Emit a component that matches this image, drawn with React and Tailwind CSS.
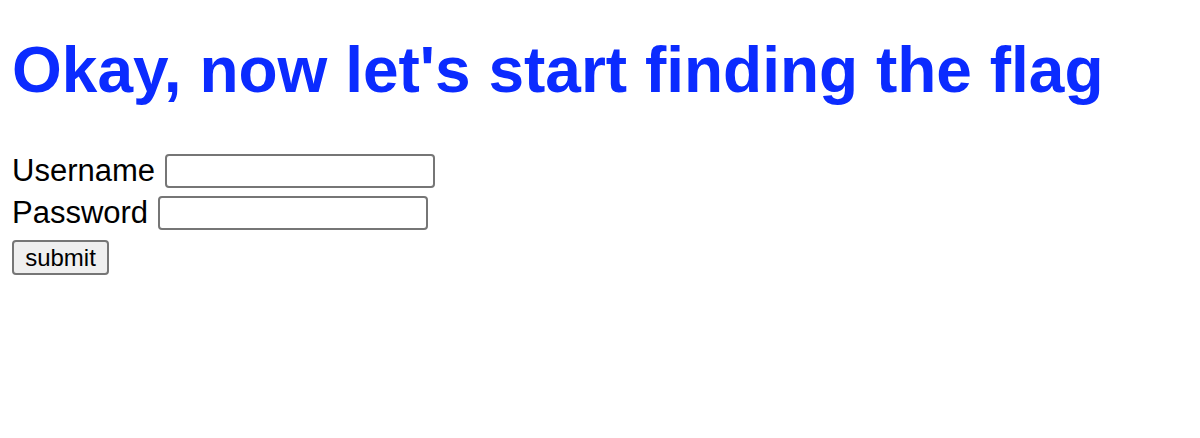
export default function App() {
  return (
    <div className="min-h-[438px] bg-white px-3 pt-[38px] text-black font-['Liberation_Sans',Arial,sans-serif]">
      <h1 className="text-[64px] font-bold leading-[64px] text-[#0b2bff]">
        Okay, now let's start finding the flag
      </h1>
      <form className="mt-[48px] text-[31px] leading-[42px]">
        <div className="flex items-center gap-[10px] h-[42px]">
          <span>Username</span>
          <input className="h-[34px] w-[270px] rounded-[4px] border-2 border-[#767676] bg-white" />
        </div>
        <div className="flex items-center gap-[10px] h-[42px]">
          <span>Password</span>
          <input className="h-[34px] w-[270px] rounded-[4px] border-2 border-[#767676] bg-white" />
        </div>
        <div className="flex pt-[6px]">
          <button type="button" className="h-[35px] w-[97px] rounded-[4px] border-2 border-[#767676] bg-[#efefef] text-[24px] leading-[30px]">
            submit
          </button>
        </div>
      </form>
    </div>
  );
}
